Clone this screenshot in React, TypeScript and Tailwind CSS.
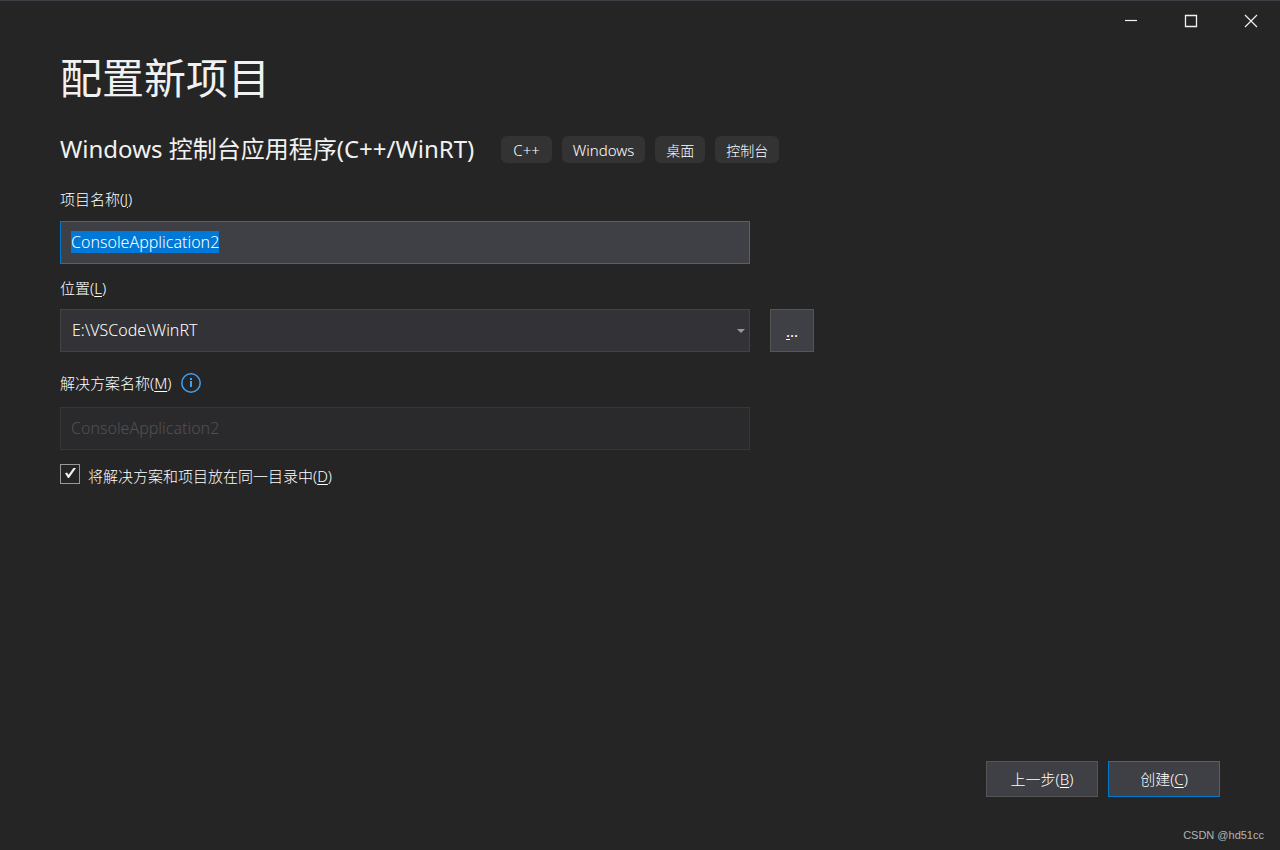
import { useEffect, useRef, useState } from 'react';
import type { ReactNode } from 'react';

const tags = [
  { text: 'C++', style: 'px-3 text-[15px]' },
  { text: 'Windows', style: 'px-[11px] text-[15px]' },
  { text: '桌面', style: 'px-[11px] text-sm' },
  { text: '控制台', style: 'px-[11px] text-sm' },
];

const locations = ['E:\\VSCode\\WinRT'];

interface WindowButtonProps {
  label: string;
  children: ReactNode;
}

function WindowButton({ label, children }: WindowButtonProps) {
  return (
    <button
      type="button"
      aria-label={label}
      className="flex h-10 w-[60px] items-center justify-center text-[#f1f1f1] hover:bg-[#3f3f46]"
    >
      <svg width="16" height="14" viewBox="-2 0 16 14" fill="none" stroke="currentColor">
        {children}
      </svg>
    </button>
  );
}

// Access key in parentheses, e.g. (J)
function AccessKey({ letter }: { letter: string }) {
  return (
    <>
      (<span className="underline underline-offset-2">{letter}</span>)
    </>
  );
}

export default function App() {
  const [name, setName] = useState('ConsoleApplication2');
  const [location, setLocation] = useState(locations[0]);
  const [sameDirectory, setSameDirectory] = useState(true);
  const nameRef = useRef<HTMLInputElement>(null);

  useEffect(() => {
    nameRef.current?.focus();
    nameRef.current?.select();
  }, []);

  return (
    <div className="flex min-h-screen flex-col border-t border-[#3f3f46] bg-[#252526] font-['Noto_Sans','Noto_Sans_CJK_SC',sans-serif] text-[15px] leading-5 font-light text-white">
      <header className="flex justify-end">
        <WindowButton label="最小化">
          <path d="M1 6.5h12" strokeWidth="1.2" />
        </WindowButton>
        <WindowButton label="最大化">
          <path d="M1.5 1.5h11v11h-11z" strokeWidth="1.3" />
        </WindowButton>
        <WindowButton label="关闭">
          <path d="M1 1l12 12M13 1L1 13" strokeWidth="1.2" />
        </WindowButton>
      </header>

      <form className="flex flex-1 flex-col" onSubmit={(e) => e.preventDefault()}>
        <main className="flex-1 px-[60px] pt-[9px]">
          <h1 className="text-[42px] leading-[56px] font-normal text-[#f1f1f1]">配置新项目</h1>

          <div className="mt-[27px] flex flex-wrap items-center gap-[27px]">
            <h2 className="text-2xl leading-8 font-normal text-[#f1f1f1]">
              Windows 控制台应用程序(C++/WinRT)
            </h2>
            <ul className="flex gap-[10px]">
              {tags.map((tag) => (
                <li
                  key={tag.text}
                  className={`rounded-md bg-[#333334] pt-[5px] pb-[3px] leading-[19px] ${tag.style}`}
                >
                  {tag.text}
                </li>
              ))}
            </ul>
          </div>

          <div className="mt-6 max-w-[690px]">
            <label htmlFor="project-name" className="block">
              项目名称
              <AccessKey letter="J" />
            </label>
            <input
              id="project-name"
              ref={nameRef}
              type="text"
              value={name}
              onChange={(e) => setName(e.target.value)}
              className="mt-3 block h-[43px] w-full border border-[#007acc] bg-[#3f3f46] px-[10px] pb-[2px] text-base leading-[21px] outline-none selection:bg-[#0078d7] selection:text-white"
            />
          </div>

          <div className="mt-[14px]">
            <label htmlFor="location" className="block">
              位置
              <AccessKey letter="L" />
            </label>
            <div className="mt-[11px] flex gap-5">
              <div className="relative w-full max-w-[690px]">
                <select
                  id="location"
                  value={location}
                  onChange={(e) => setLocation(e.target.value)}
                  className="block h-[43px] w-full appearance-none border border-[#434346] bg-[#333337] px-[11px] pb-[2px] text-base outline-none"
                >
                  {locations.map((path) => (
                    <option key={path}>{path}</option>
                  ))}
                </select>
                <svg
                  className="pointer-events-none absolute top-5 right-[5px] text-[#999999]"
                  width="8"
                  height="4"
                  viewBox="0 0 8 4"
                  fill="currentColor"
                >
                  <path d="M0 0h8L4 4z" />
                </svg>
              </div>
              <button
                type="button"
                aria-label="浏览"
                className="h-[43px] w-11 shrink-0 border border-[#555555] bg-[#3f3f46] font-normal"
              >
                <span className="underline underline-offset-2">.</span>..
              </button>
            </div>
          </div>

          <div className="mt-[21px] max-w-[690px]">
            <div className="flex items-center gap-[10px]">
              <label htmlFor="solution-name">
                解决方案名称
                <AccessKey letter="M" />
              </label>
              <svg width="20" height="20" viewBox="0 0 20 20" fill="none" role="img" aria-label="信息">
                <circle cx="10" cy="10" r="9.2" stroke="#3fa0f0" strokeWidth="1.5" />
                <path d="M9 5h2v2H9zM9 8h2v6H9z" fill="#3fa0f0" />
              </svg>
            </div>
            <input
              id="solution-name"
              type="text"
              value={name}
              disabled
              readOnly
              className="mt-[14px] block h-[43px] w-full border border-[#363638] bg-[#2a2a2c] px-[10px] pb-[2px] text-base leading-[21px] text-[#505053]"
            />
          </div>

          <div className="mt-[14px] flex gap-2">
            <span className="relative size-5 shrink-0">
              <input
                id="same-directory"
                type="checkbox"
                checked={sameDirectory}
                onChange={(e) => setSameDirectory(e.target.checked)}
                className="block size-5 appearance-none border border-[#999999] bg-[#252526]"
              />
              {sameDirectory && (
                <svg
                  className="pointer-events-none absolute inset-0"
                  width="20"
                  height="20"
                  viewBox="0 0 20 20"
                  fill="#f1f1f1"
                >
                  <path d="M5 9.2L7 8.4L8.6 10.8L13.4 4H16L9 14H8z" />
                </svg>
              )}
            </span>
            <label htmlFor="same-directory" className="pt-[2px]">
              将解决方案和项目放在同一目录中
              <AccessKey letter="D" />
            </label>
          </div>
        </main>

        <div className="flex justify-end gap-[10px] px-[60px]">
          <button type="button" className="h-9 w-28 border border-[#555555] bg-[#3f3f46]">
            上一步
            <AccessKey letter="B" />
          </button>
          <button type="submit" className="h-9 w-28 border border-[#007acc] bg-[#3f3f46]">
            创建
            <AccessKey letter="C" />
          </button>
        </div>
      </form>

      <footer className="px-4 pt-[31px] pb-[7px] text-right font-['Liberation_Sans',sans-serif] text-[11px] leading-[15px] font-normal text-[#b4b4b4]">
        CSDN @hd51cc
      </footer>
    </div>
  );
}
